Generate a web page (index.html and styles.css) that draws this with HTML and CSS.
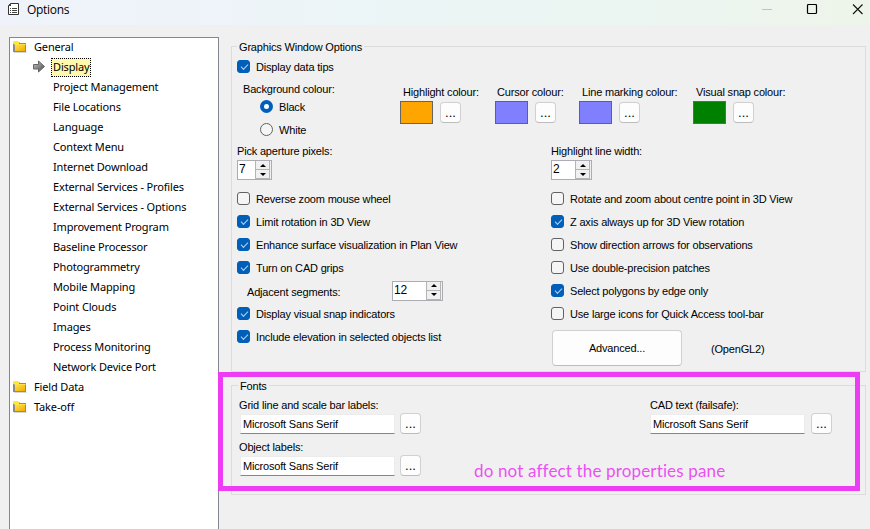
FILE: index.html
```html
<!DOCTYPE html>
<html lang="en">
<head>
  <meta charset="UTF-8">
  <title>Options</title>
  <link rel="stylesheet" href="styles.css">
</head>
<body>
<svg class="defs" width="0" height="0">
  <linearGradient id="gold" x1="0" y1="0" x2="1" y2="1">
    <stop offset="0" stop-color="#ffe14a"/>
    <stop offset="1" stop-color="#f2ac00"/>
  </linearGradient>
  <linearGradient id="steel" x1="0" y1="0" x2="1" y2="1">
    <stop offset="0" stop-color="#c4c4c4"/>
    <stop offset="1" stop-color="#4a4a4a"/>
  </linearGradient>
  <symbol id="folder" viewBox="0 0 14 13">
    <path d="M1 11.500h12.500" stroke="#d5d5d5"/>
    <path d="M0 1h6l1 1h6v9H0z" fill="#8b8b8b"/>
    <path d="M1 0h4l1 1v2H0V1z" fill="#ffe92e"/>
    <path d="M2 4h10v6H2z" fill="url(#gold)"/>
    <path d="M1.500 3.500h11" stroke="#ffe14a"/>
  </symbol>
</svg>
<div class="titlebar">
  <svg class="app-icon" width="11" height="12" viewBox="0 0 11 12">
    <path d="M2.500.5h8v11h-10v-9z" fill="#fff" stroke="#333"/>
    <path d="M.5 3l2.500-2.500V3z" fill="#333"/>
    <path d="M2 5.500h1M4 5.500h5M2 7.500h1M4 7.500h5M2 9.500h1M4 9.500h5" stroke="#444"/>
  </svg>
  <span class="title">Options</span>
  <svg class="win-buttons" width="102" height="12" viewBox="0 0 102 12">
    <path d="M0 5.500h10" stroke="#bcc4be"/>
    <rect x="45.500" y=".5" width="9" height="9" rx="1" fill="none" stroke="#000" stroke-width="1.200"/>
    <path d="M91 .5l9.500 9.500M100.500 .5L91 10" stroke="#111" stroke-width="1.100"/>
  </svg>
</div>
<div class="main">
  <ul class="tree">
    <li class="folder"><svg width="14" height="13"><use href="#folder"/></svg>General</li>
    <li class="current"><svg width="12" height="14" viewBox="0 0 12 14"><path d="M.5 4.500h5V1l6 5.500-6 5.500V9h-5z" fill="url(#steel)" stroke="#666"/></svg><span>Display</span></li>
    <li>Project Management</li>
    <li>File Locations</li>
    <li>Language</li>
    <li>Context Menu</li>
    <li>Internet Download</li>
    <li>External Services - Profiles</li>
    <li>External Services - Options</li>
    <li>Improvement Program</li>
    <li>Baseline Processor</li>
    <li>Photogrammetry</li>
    <li>Mobile Mapping</li>
    <li>Point Clouds</li>
    <li>Images</li>
    <li>Process Monitoring</li>
    <li>Network Device Port</li>
    <li class="folder"><svg width="14" height="13"><use href="#folder"/></svg>Field Data</li>
    <li class="folder"><svg width="14" height="13"><use href="#folder"/></svg>Take-off</li>
  </ul>
  <div class="panel">
    <fieldset class="graphics">
      <legend>Graphics Window Options</legend>
      <label class="check on"><i></i>Display data tips</label>
      <div class="colours">
        <div class="background">
          <p>Background colour:</p>
          <label class="radio on"><i></i>Black</label>
          <label class="radio"><i></i>White</label>
        </div>
        <div class="colour highlight"><p>Highlight colour:</p><b class="orange"></b><button class="more">...</button></div>
        <div class="colour cursor"><p>Cursor colour:</p><b class="blue"></b><button class="more">...</button></div>
        <div class="colour marking"><p>Line marking colour:</p><b class="blue"></b><button class="more">...</button></div>
        <div class="colour snap"><p>Visual snap colour:</p><b class="green"></b><button class="more">...</button></div>
      </div>
      <div class="columns">
        <div class="column">
          <p>Pick aperture pixels:</p>
          <div class="spinner small"><span>7</span><em><i></i><i></i></em></div>
          <label class="check"><i></i>Reverse zoom mouse wheel</label>
          <label class="check on"><i></i>Limit rotation in 3D View</label>
          <label class="check on"><i></i>Enhance surface visualization in Plan View</label>
          <label class="check on"><i></i>Turn on CAD grips</label>
          <div class="segments">
            <p>Adjacent segments:</p>
            <div class="spinner large"><span>12</span><em><i></i><i></i></em></div>
          </div>
          <label class="check on"><i></i>Display visual snap indicators</label>
          <label class="check on"><i></i>Include elevation in selected objects list</label>
        </div>
        <div class="column">
          <p>Highlight line width:</p>
          <div class="spinner"><span>2</span><em><i></i><i></i></em></div>
          <label class="check"><i></i>Rotate and zoom about centre point in 3D View</label>
          <label class="check on"><i></i>Z axis always up for 3D View rotation</label>
          <label class="check"><i></i>Show direction arrows for observations</label>
          <label class="check"><i></i>Use double-precision patches</label>
          <label class="check on"><i></i>Select polygons by edge only</label>
          <label class="check"><i></i>Use large icons for Quick Access tool-bar</label>
          <div class="renderer"><button class="advanced">Advanced...</button><p>(OpenGL2)</p></div>
        </div>
      </div>
    </fieldset>
    <fieldset class="fonts">
      <legend>Fonts</legend>
      <div class="font">
        <p>Grid line and scale bar labels:</p>
        <div><span class="field">Microsoft Sans Serif</span><button class="more">...</button></div>
      </div>
      <div class="font">
        <p>CAD text (failsafe):</p>
        <div><span class="field">Microsoft Sans Serif</span><button class="more">...</button></div>
      </div>
      <div class="font">
        <p>Object labels:</p>
        <div><span class="field">Microsoft Sans Serif</span><button class="more">...</button></div>
      </div>
    </fieldset>
  </div>
</div>
<div class="note"><span>do not affect the properties pane</span></div>
</body>
</html>
```

FILE: styles.css
```css
* {
  margin: 0;
  padding: 0;
  box-sizing: border-box;
}
body {
  width: 870px;
  height: 529px;
  overflow: hidden;
  position: relative;
  background-color: #f0f0f0;
  color: #000;
  font: 11px/14px "Liberation Sans", Arial, sans-serif;
  letter-spacing: -0.18px;
}
ul {
  list-style: none;
}
i, em {
  font-style: normal;
}
.defs {
  position: absolute;
}
.titlebar {
  display: flex;
  height: 25px;
  padding: 3px 6px 0 8px;
  background: linear-gradient(90deg, #eff2fa 0, #eef3f9 20%, #ebf5f6 45%, #ecf5f0 80%, #eef4e9 100%);
}
.title {
  margin-left: 8px;
  font: 12px/14px "Open Sans", "Noto Sans", sans-serif;
  letter-spacing: -0.3px;
}
.win-buttons {
  margin: 1px 0 0 auto;
}
.main {
  display: flex;
  height: 504px;
  padding: 12px 0 0 9px;
}
.tree {
  width: 210px;
  height: 500px;
  border: 1px solid #828790;
  background-color: #fff;
  font: 11px/20px "Noto Sans", sans-serif;
  letter-spacing: -0.15px;
}
.tree li {
  display: flex;
  align-items: center;
  height: 20px;
  padding-left: 43px;
  position: relative;
  top: -1px;
}
.tree .folder {
  padding-left: 3px;
}
.folder svg {
  margin-right: 7px;
}
.tree .current {
  padding-left: 23px;
}
.current svg {
  margin-right: 6px;
}
.current span {
  height: 19px;
  padding: 0 1px;
  border: 1px dotted #000;
  background-color: #fff9ae;
  line-height: 16px;
}
.panel {
  width: 635px;
  margin: 3px 0 0 12px;
}
fieldset {
  border: 1px solid #dcdcdc;
}
legend {
  height: 13px;
  padding: 0 2px;
  line-height: 14px;
}
.graphics {
  height: 332px;
  padding-left: 5px;
}
.check, .radio {
  display: flex;
  align-items: center;
  height: 23px;
}
.check i {
  width: 13px;
  height: 13px;
  margin-right: 6px;
  border: 1px solid #626262;
  border-radius: 3px;
  background-color: #f5f5f5;
}
.check.on i {
  border-color: #005fb8;
  background-color: #005fb8;
}
.check.on i::before {
  content: "";
  display: block;
  width: 6px;
  height: 3px;
  margin: 3px 0 0 3px;
  border: solid #b9d4ee;
  border-width: 0 0 1px 1px;
  transform: rotate(-45deg);
}
.graphics > .check {
  height: 27px;
}
.colours {
  display: flex;
  height: 64px;
}
.background {
  width: 163px;
  padding: 2px 0 0 6px;
}
.radio {
  padding-left: 17px;
}
.background p {
  height: 13px;
}
.radio i {
  width: 13px;
  height: 13px;
  margin-right: 6px;
  border: 1px solid #626262;
  border-radius: 50%;
  background-color: #f5f5f5;
}
.radio.on i {
  border: 4px solid #005fb8;
  background-color: #fff;
}
.colour {
  display: grid;
  grid-template-columns: 40px 21px;
  grid-template-rows: 16px 23px;
  align-content: start;
  align-items: center;
  padding-top: 5px;
}
.colour p {
  grid-column: span 2;
  align-self: start;
  padding-left: 3px;
  white-space: nowrap;
}
.colour b {
  width: 33px;
  height: 23px;
  border: 1px solid #646464;
}
.highlight {
  width: 95px;
}
.cursor {
  width: 84px;
}
.cursor p {
  padding-left: 2px;
}
.marking {
  width: 114px;
}
.orange {
  background-color: #ffa500;
}
.blue {
  background-color: #8080ff;
}
.green {
  background-color: #008000;
}
button {
  border: 1px solid #d0d0d0;
  border-bottom-color: #bcbcbc;
  border-radius: 4px;
  background-color: #fdfdfd;
  color: #000;
  font: inherit;
  letter-spacing: inherit;
}
.more {
  width: 21px;
  height: 21px;
  padding-top: 1px;
  font-size: 13px;
  line-height: 14px;
  letter-spacing: 0;
}
.columns {
  display: grid;
  grid-template-columns: 314px 1fr;
}
.column > p {
  height: 16px;
}
.spinner {
  display: flex;
  width: 41px;
  height: 20px;
  border: 1px solid #abadb3;
  background-color: #fff;
}
.column > .spinner {
  margin-bottom: 7px;
}
.spinner span {
  flex: 1;
  padding-left: 1px;
  font-size: 12px;
  line-height: 16px;
}
.small {
  width: 35px;
}
.large {
  width: 51px;
}
.spinner em {
  display: flex;
  flex-direction: column;
  width: 16px;
  height: 18px;
  padding-right: 1px;
  background-color: #f0f0f0;
}
.spinner em i {
  display: flex;
  align-items: center;
  justify-content: center;
  height: 9px;
  border: 1px solid #b4b4b4;
  border-top: 0;
}
.spinner em i::before {
  content: "";
  border: solid transparent;
  border-width: 0 3px 3px;
  border-bottom-color: #000;
}
.spinner em i + i::before {
  border-width: 3px 3px 0;
  border-top-color: #000;
}
.segments {
  display: flex;
  align-items: center;
  height: 23px;
}
.segments p {
  width: 155px;
  padding: 3px 0 0 10px;
}
.renderer {
  display: flex;
  align-items: center;
  height: 36px;
  margin: 5px 0 0 1px;
}
.renderer p {
  padding-top: 1px;
}
.advanced {
  width: 130px;
  height: 36px;
  margin-right: 29px;
}
.fonts {
  display: grid;
  grid-template-columns: 410px 1fr;
  grid-template-rows: 42px 42px;
  height: 116px;
  margin-top: 7px;
  padding: 6px 0 0 8px;
}
.fonts legend {
  margin-left: -2px;
}
.font p {
  height: 15px;
  margin-left: -1px;
}
.font:nth-of-type(2) p {
  margin-left: 0;
}
.font div {
  display: flex;
  align-items: center;
}
.field {
  width: 155px;
  height: 20px;
  margin-right: 5px;
  padding-left: 2px;
  border: 1px solid #ececec;
  border-bottom-color: #868686;
  background-color: #fff;
  line-height: 18px;
}
.font:nth-of-type(2) .field {
  margin-right: 6px;
}
/* callout drawn over the dialog */
.note {
  display: flex;
  position: absolute;
  left: 218px;
  top: 372px;
  width: 642px;
  height: 119px;
  padding: 83px 0 0 251px;
  border: 5px solid #ec3df5;
  color: #ec50f2;
  font: 17px/22px Lato, sans-serif;
  letter-spacing: 0.15px;
  white-space: nowrap;
}
```
